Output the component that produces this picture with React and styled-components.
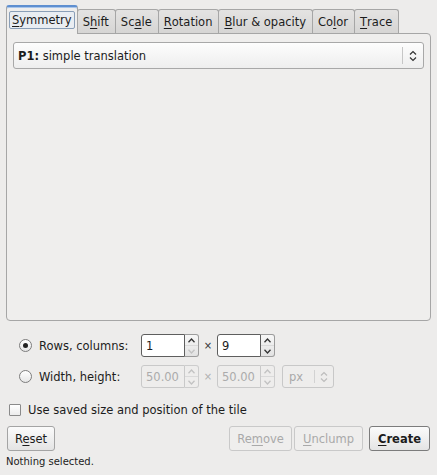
import React from 'react';
import styled, { createGlobalStyle, css } from 'styled-components';

const GlobalStyle = createGlobalStyle`
  html, body {
    margin: 0;
    padding: 0;
    background: #edeceb;
  }
  body {
    font-family: "DejaVu Sans", "Liberation Sans", sans-serif;
    font-size: 11.5px;
    color: #1c1c1c;
  }
`;

const Window = styled.div`
  width: 437px;
  height: 475px;
  overflow: hidden;
  background: #edeceb;
`;

const TabBar = styled.div`
  display: flex;
  align-items: flex-end;
  height: 33px;
  padding-left: 6px;
  position: relative;
  z-index: 1;
`;

const Tab = styled.div`
  box-sizing: border-box;
  display: flex;
  align-items: center;
  justify-content: center;
  border: 1px solid #a6a6a6;
  border-bottom: none;
  border-radius: 3px 3px 0 0;
  white-space: nowrap;
  ${(p) =>
    p.$active
      ? css`
          height: 29px;
          margin-bottom: -1px;
          padding: 0 2px 1px;
          background: #efeeed;
          border-top: 2px solid #5f8fd0;
          box-shadow: inset 0 1px 0 #a9c6ec;
        `
      : css`
          height: 24px;
          padding: 0 6px 0 5px;
          margin-left: -1px;
          background: linear-gradient(#e4e3e2, #d6d5d4);
        `}
`;

const FocusBox = styled.span`
  border: 1px solid #8a9fb8;
  border-radius: 2px;
  padding: 1px 2px;
  background: #e9edf2;
`;

const Key = styled.span`
  text-decoration: underline;
  text-underline-offset: 2px;
`;

const Panel = styled.div`
  box-sizing: border-box;
  margin: 0 6px;
  height: 288px;
  border: 1px solid #a6a6a6;
  border-radius: 0 4px 4px 4px;
  background: #efeeed;
  padding: 8px 6px;
`;

const Combo = styled.div`
  box-sizing: border-box;
  display: flex;
  align-items: center;
  height: 27px;
  border: 1px solid #a8a8a8;
  border-radius: 3px;
  background: linear-gradient(#fdfdfd, #eeeeee);
  padding-left: 4px;
  color: ${(p) => (p.$disabled ? '#a9a9a9' : '#1c1c1c')};
  border-color: ${(p) => (p.$disabled ? '#c8c8c8' : '#a8a8a8')};
  ${(p) =>
    p.$disabled &&
    css`
      background: #eeedec;
    `}
`;

const ComboText = styled.span`
  flex: 1;
`;

const ComboSep = styled.span`
  width: 1px;
  align-self: stretch;
  margin: 4px 0;
  background: ${(p) => (p.$disabled ? '#d2d2d2' : '#c6c6c6')};
`;

const ComboArrow = styled.span`
  width: ${(p) => p.$w || 20}px;
  display: flex;
  align-items: center;
  justify-content: center;
`;

const Form = styled.div`
  margin-top: 13px;
  padding-left: 19px;
  display: flex;
  flex-direction: column;
  gap: 8px;
`;

const Row = styled.div`
  display: flex;
  align-items: center;
  height: 23px;
`;

const RadioLabel = styled.label`
  display: flex;
  align-items: center;
  gap: 7px;
  width: 122px;
`;

const Radio = styled.span`
  box-sizing: border-box;
  width: 13px;
  height: 13px;
  border-radius: 50%;
  border: 1px solid #7d7d7d;
  background: linear-gradient(#ffffff, #e6e6e6);
  display: flex;
  align-items: center;
  justify-content: center;
  &::after {
    content: '';
    width: 5px;
    height: 5px;
    border-radius: 50%;
    background: ${(p) => (p.$checked ? '#222' : 'transparent')};
  }
`;

const Spin = styled.div`
  display: flex;
  height: 23px;
`;

const SpinEntry = styled.div`
  box-sizing: border-box;
  width: 44px;
  height: 100%;
  border: 1px solid ${(p) => (p.$disabled ? '#c9c9c9' : '#5e5e5e')};
  border-radius: 3px 0 0 3px;
  background: ${(p) => (p.$disabled ? '#eeedec' : '#ffffff')};
  color: ${(p) => (p.$disabled ? '#ababab' : '#1c1c1c')};
  display: flex;
  align-items: center;
  padding-left: 4px;
`;

const SpinButtons = styled.div`
  box-sizing: border-box;
  width: 14px;
  height: 100%;
  border: 1px solid ${(p) => (p.$disabled ? '#cdcdcd' : '#9c9c9c')};
  border-left: none;
  border-radius: 0 3px 3px 0;
  background: ${(p) => (p.$disabled ? '#eeedec' : 'linear-gradient(#f7f7f7, #e2e2e2)')};
  display: flex;
  flex-direction: column;
`;

const SpinHalf = styled.div`
  flex: 1;
  display: flex;
  align-items: center;
  justify-content: center;
  & + & {
    border-top: 1px solid ${(p) => (p.$disabled ? '#dadada' : '#b8b8b8')};
  }
`;

const Times = styled.span`
  width: 18px;
  text-align: center;
  font-size: 10px;
  color: ${(p) => (p.$disabled ? '#b0b0b0' : '#333')};
`;

const UnitBox = styled(Combo)`
  width: 52px;
  height: 23px;
  margin-left: 7px;
  padding-left: 6px;
`;

const CheckRow = styled.label`
  display: flex;
  align-items: center;
  gap: 7px;
  margin: 15px 0 0 9px;
  height: 13px;
`;

const Checkbox = styled.span`
  box-sizing: border-box;
  width: 12px;
  height: 12px;
  border: 1px solid #8a8a8a;
  border-radius: 1px;
  background: linear-gradient(#ffffff, #ececec);
`;

const ButtonRow = styled.div`
  display: flex;
  align-items: center;
  margin: 10px 7px 0 7px;
  gap: 2px;
`;

const Spacer = styled.div`
  flex: 1;
`;

const Button = styled.button`
  box-sizing: border-box;
  height: 25px;
  width: ${(p) => p.$w}px;
  padding: 0;
  font: inherit;
  border-radius: 3px;
  border: 1px solid #a4a4a4;
  background: linear-gradient(#fbfbfb, #e4e4e4);
  color: #1c1c1c;
  ${(p) =>
    p.$default &&
    css`
      font-weight: bold;
      border-color: #7c7c7c;
      margin-left: 4px;
    `}
  ${(p) =>
    p.disabled &&
    css`
      color: #a9a9a9;
      border-color: #c9c9c9;
      background: #efeeed;
    `}
`;

const Status = styled.div`
  margin: 5px 0 0 6px;
  font-size: 10px;
  color: #1c1c1c;
`;

const Chevron = ({ up, color = '#333' }) => (
  <svg width="7" height="5" viewBox="0 0 7 5">
    <path
      d={up ? 'M0.5 4.2 L3.5 1 L6.5 4.2' : 'M0.5 0.8 L3.5 4 L6.5 0.8'}
      fill="none"
      stroke={color}
      strokeWidth="1.3"
    />
  </svg>
);

const UpDown = ({ color }) => (
  <svg width="8" height="12" viewBox="0 0 8 12">
    <path d="M1 4.5 L4 1.5 L7 4.5" fill="none" stroke={color} strokeWidth="1.2" />
    <path d="M1 7.5 L4 10.5 L7 7.5" fill="none" stroke={color} strokeWidth="1.2" />
  </svg>
);

const SpinBox = ({ value, disabled, upOn = true, downOn = true }) => (
  <Spin>
    <SpinEntry $disabled={disabled}>{value}</SpinEntry>
    <SpinButtons $disabled={disabled}>
      <SpinHalf $disabled={disabled}>
        <Chevron up color={disabled || !upOn ? '#c2c2c2' : '#333'} />
      </SpinHalf>
      <SpinHalf $disabled={disabled}>
        <Chevron color={disabled || !downOn ? '#c2c2c2' : '#333'} />
      </SpinHalf>
    </SpinButtons>
  </Spin>
);

const tabs = [
  { pre: '', key: 'S', post: 'ymmetry' },
  { pre: 'S', key: 'h', post: 'ift' },
  { pre: 'Sc', key: 'a', post: 'le' },
  { pre: '', key: 'R', post: 'otation' },
  { pre: '', key: 'B', post: 'lur & opacity' },
  { pre: 'Co', key: 'l', post: 'or' },
  { pre: '', key: 'T', post: 'race' },
];

export default function App() {
  return (
    <Window>
      <GlobalStyle />
      <TabBar>
        {tabs.map((t, i) => {
          const label = (
            <>
              {t.pre}
              <Key>{t.key}</Key>
              {t.post}
            </>
          );
          return (
            <Tab key={i} $active={i === 0}>
              {i === 0 ? <FocusBox>{label}</FocusBox> : label}
            </Tab>
          );
        })}
      </TabBar>
      <Panel>
        <Combo>
          <ComboText>
            <b>P1:</b> simple translation
          </ComboText>
          <ComboSep />
          <ComboArrow>
            <UpDown color="#333" />
          </ComboArrow>
        </Combo>
      </Panel>

      <Form>
        <Row>
          <RadioLabel>
            <Radio $checked />
            Rows, columns:
          </RadioLabel>
          <SpinBox value="1" downOn={false} />
          <Times>×</Times>
          <SpinBox value="9" />
        </Row>
        <Row>
          <RadioLabel>
            <Radio />
            Width, height:
          </RadioLabel>
          <SpinBox value="50.00" disabled />
          <Times $disabled>×</Times>
          <SpinBox value="50.00" disabled />
          <UnitBox $disabled>
            <ComboText>px</ComboText>
            <ComboSep $disabled />
            <ComboArrow $w={18}>
              <UpDown color="#bdbdbd" />
            </ComboArrow>
          </UnitBox>
        </Row>
      </Form>

      <CheckRow>
        <Checkbox />
        Use saved size and position of the tile
      </CheckRow>

      <ButtonRow>
        <Button $w={48}>
          R<Key>e</Key>set
        </Button>
        <Spacer />
        <Button $w={63} disabled>
          Re<Key>m</Key>ove
        </Button>
        <Button $w={69} disabled>
          <Key>U</Key>nclump
        </Button>
        <Button $w={61} $default>
          <Key>C</Key>reate
        </Button>
      </ButtonRow>
      <Status>Nothing selected.</Status>
    </Window>
  );
}
